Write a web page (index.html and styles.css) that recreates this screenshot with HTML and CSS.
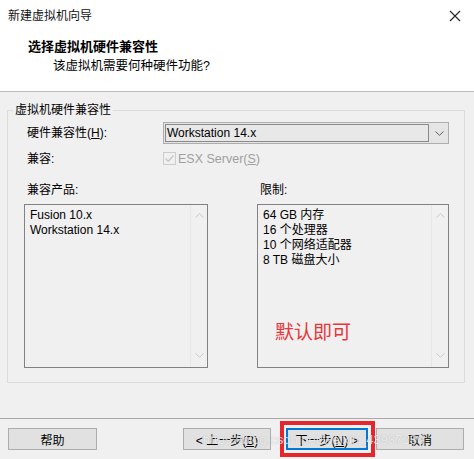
FILE: index.html
```html
<!DOCTYPE html>
<html lang="zh-CN">
<head>
<meta charset="utf-8">
<title>新建虚拟机向导</title>
<link rel="stylesheet" href="styles.css">
</head>
<body>
<div class="window">
  <header class="top">
    <div class="titlebar">
      <span class="title">新建虚拟机向导</span>
      <svg class="close" viewBox="0 0 12 12" width="12" height="12"><path d="M1 1L11 11M11 1L1 11" stroke="#222" stroke-width="1.1" fill="none"/></svg>
    </div>
    <div class="heading">选择虚拟机硬件兼容性</div>
    <div class="sub">该虚拟机需要何种硬件功能?</div>
  </header>

  <main class="main">
    <fieldset class="group">
      <legend class="legend">虚拟机硬件兼容性</legend>
      <div class="group-body">
        <div class="row row-hw">
          <label class="row-label">硬件兼容性(<u>H</u>):</label>
          <div class="combo">
            <div class="combo-field">Workstation 14.x</div>
            <div class="combo-arrow"><svg viewBox="0 0 9 5" width="9" height="5"><path d="M0.5 0.5L4.5 4.3L8.5 0.5" stroke="#606060" stroke-width="1" fill="none"/></svg></div>
          </div>
        </div>
        <div class="row row-compat">
          <label class="row-label">兼容:</label>
          <span class="checkbox"><svg viewBox="0 0 13 13" width="13" height="13"><path d="M2.5 6.5L5.2 9.2L10.5 3.5" stroke="#c6c6c6" stroke-width="1.3" fill="none"/></svg></span>
          <span class="disabled-text">ESX Server(<u>S</u>)</span>
        </div>
        <div class="lists">
          <div class="col">
            <div class="col-label">兼容产品:</div>
            <div class="listbox">
              <ul class="items">
                <li>Fusion 10.x</li>
                <li>Workstation 14.x</li>
              </ul>
              <div class="scroll">
                <svg viewBox="0 0 9 5" width="9" height="5"><path d="M0.5 4.5L4.5 0.7L8.5 4.5" stroke="#c8c8c8" stroke-width="1" fill="none"/></svg>
                <svg viewBox="0 0 9 5" width="9" height="5"><path d="M0.5 0.5L4.5 4.3L8.5 0.5" stroke="#c8c8c8" stroke-width="1" fill="none"/></svg>
              </div>
            </div>
          </div>
          <div class="col">
            <div class="col-label">限制:</div>
            <div class="listbox">
              <ul class="items">
                <li>64 GB 内存</li>
                <li>16 个处理器</li>
                <li>10 个网络适配器</li>
                <li>8 TB 磁盘大小</li>
              </ul>
              <div class="scroll">
                <svg viewBox="0 0 9 5" width="9" height="5"><path d="M0.5 4.5L4.5 0.7L8.5 4.5" stroke="#c8c8c8" stroke-width="1" fill="none"/></svg>
                <svg viewBox="0 0 9 5" width="9" height="5"><path d="M0.5 0.5L4.5 4.3L8.5 0.5" stroke="#c8c8c8" stroke-width="1" fill="none"/></svg>
              </div>
              <div class="note">默认即可</div>
            </div>
          </div>
        </div>
      </div>
    </fieldset>
  </main>

  <footer class="footer">
    <button class="btn btn-help">帮助</button>
    <button class="btn btn-back">&lt; 上一步(<u>B</u>)</button>
    <button class="btn btn-next">下一步(<u>N</u>) &gt;</button>
    <button class="btn btn-cancel">取消</button>
  </footer>

  <div class="highlight"></div>
  <div class="watermark">https://blog.csdn.net/weixin_43937286</div>
</div>
</body>
</html>
```

FILE: styles.css
```css
* { box-sizing: border-box; }
html, body { margin: 0; padding: 0; }
body {
  width: 474px;
  height: 459px;
  overflow: hidden;
  background: #f0f0f0;
  font-family: "Liberation Sans", "Noto Sans CJK SC", sans-serif;
  font-size: 12px;
  color: #000;
}
.window {
  position: relative;
  width: 474px;
  height: 459px;
  display: flex;
  flex-direction: column;
}
.top {
  flex: none;
  height: 92px;
  background: #fff;
  border-bottom: 1px solid #bdbdbd;
}
.titlebar {
  height: 32px;
  display: flex;
  align-items: center;
  justify-content: space-between;
  padding: 0 13px 0 8px;
}
.title { line-height: 16px; color: #111; }
.close { display: block; }
.heading {
  margin: 6px 0 0 28px;
  font-weight: bold;
  font-size: 13px;
  line-height: 18px;
}
.sub {
  margin: 1px 0 0 53px;
  line-height: 18px;
  font-size: 12.5px;
}
.main {
  flex: none;
  height: 326px;
  padding: 10px 0 0 7px;
}
.group {
  margin: 0;
  padding: 0;
  width: 458px;
  height: 281px;
  border: 1px solid #dcdcdc;
  min-width: 0;
}
.legend {
  margin-left: 5px;
  padding: 0 2px;
  line-height: 16px;
}
.group-body {
  padding: 4px 15px 0 16px;
}
.row {
  display: flex;
  align-items: center;
}
.row-label {
  width: 139px;
  padding-left: 3px;
  line-height: 16px;
}
.row-hw { height: 22px; }
.row-compat { height: 15px; margin-top: 7px; }
.combo {
  width: 286px;
  height: 22px;
  display: flex;
  border: 1px solid #adadad;
  background: #e5e5e5;
}
.combo-field {
  flex: 1;
  margin: 1px;
  border: 1px solid #8a8a8a;
  background: #e8e8e8;
  padding-left: 1px;
  line-height: 16px;
}
.combo-arrow {
  width: 18px;
  display: flex;
  align-items: center;
  justify-content: center;
}
.combo-arrow svg { display: block; }
.checkbox {
  width: 13px;
  height: 13px;
  border: 1px solid #cccccc;
  background: #f0f0f0;
  display: flex;
}
.checkbox svg { display: block; margin: -1px; }
.disabled-text {
  margin-left: 2px;
  color: #a0a0a0;
  line-height: 16px;
  font-size: 12.5px;
}
.lists {
  margin-top: 16px;
  display: grid;
  grid-template-columns: 184px 192px;
  column-gap: 49px;
}
.col-label {
  padding-left: 3px;
  line-height: 16px;
}
.listbox {
  position: relative;
  margin-top: 6px;
  height: 164px;
  border: 1px solid #828282;
  background: #f0f0f0;
  display: grid;
  grid-template-columns: 1fr 17px;
}
.items {
  list-style: none;
  margin: 0;
  padding: 3px 0 0 5px;
  line-height: 15px;
}
.scroll {
  display: flex;
  flex-direction: column;
  justify-content: space-between;
  align-items: center;
  padding: 8px 0 9px;
  border-left: 1px solid #e6e6e6;
}
.scroll svg { display: block; }
.note {
  position: absolute;
  left: 17px;
  top: 117px;
  font-size: 19px;
  line-height: 22px;
  color: #e8363b;
}
.footer {
  flex: 1;
  border-top: 1px solid #a9a9a9;
  padding: 9px 0 0 8px;
  display: flex;
  align-items: flex-start;
}
.btn {
  height: 22px;
  margin: 0;
  padding: 0;
  font-family: inherit;
  font-size: 12px;
  color: #000;
  background: #e1e1e1;
  border: 1px solid #adadad;
  border-radius: 0;
}
.btn-help { width: 89px; }
.btn-back { width: 88px; margin-left: 86px; }
.btn-next {
  width: 82px;
  margin-left: 15px;
  border-color: #0078d7;
  box-shadow: inset 0 0 0 1px #0078d7;
}
.btn-cancel { width: 88px; margin-left: 8px; }
.highlight {
  position: absolute;
  left: 280px;
  top: 421px;
  width: 95px;
  height: 36px;
  border: 4px solid #e6262c;
}
.watermark {
  position: absolute;
  left: 203px;
  top: 432px;
  font-size: 13px;
  line-height: 16px;
  color: rgba(255, 255, 255, 0.72);
  text-shadow: 0 0 1px rgba(110, 110, 110, 0.45);
  white-space: nowrap;
}
```
